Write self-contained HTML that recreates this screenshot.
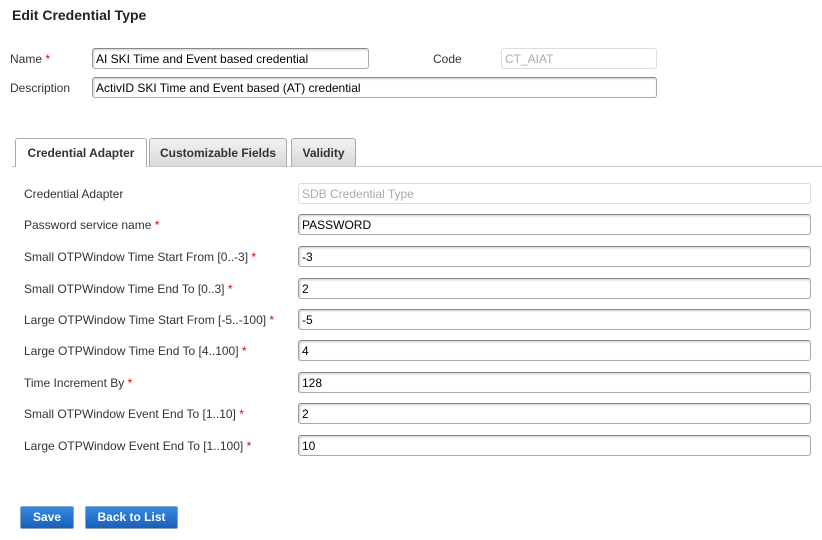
<!DOCTYPE html>
<html><head><style>
body{margin:0;width:822px;height:540px;background:#fff;font-family:"Liberation Sans",Arial,sans-serif;font-size:12px;color:#222;position:relative;overflow:hidden}
.a{position:absolute}
.t{position:absolute;font-size:12px;line-height:14px;color:#333}
.r{color:#d00}
.in{position:absolute;box-sizing:border-box;height:21px;border:1px solid #aaa;border-top-color:#888;border-left-color:#999;border-radius:3px;box-shadow:inset 1px 1px 2px #ccc;padding:3px 0 0 3px;font-size:12px;line-height:14px;color:#000;background:#fff}
.dis{border-color:#ddd;box-shadow:none;color:#aaa}
.tab{position:absolute;top:138px;height:28px;box-sizing:border-box;border:1px solid #aaa;border-bottom:none;border-radius:3px 3px 0 0;font-weight:bold;color:#333;text-align:center;line-height:28px;background:linear-gradient(#f2f2f2,#d8d8d8)}
.btn{position:absolute;top:506px;height:23px;box-sizing:border-box;border:1px solid #8aa3c4;border-radius:2px;background:linear-gradient(#3389e0,#1a5fb8);color:#fff;font-weight:bold;text-align:center;line-height:21px}
</style></head><body>
<div class="a" style="left:12px;top:6px;font-size:14px;font-weight:bold;line-height:18px">Edit Credential Type</div>
<div class="t" style="left:10px;top:52px">Name<span class="r"> *</span></div>
<div class="in" style="left:92px;top:48px;width:277px">AI SKI Time and Event based credential</div>
<div class="t" style="left:433px;top:52px">Code</div>
<div class="in dis" style="left:501px;top:48px;width:156px">CT_AIAT</div>
<div class="t" style="left:10px;top:81px">Description</div>
<div class="in" style="left:92px;top:77px;width:565px">ActivID SKI Time and Event based (AT) credential</div>

<div class="a" style="left:12px;top:166px;width:810px;height:1px;background:#ccc"></div>
<div class="tab" style="left:15px;width:132px;background:#fff;height:29px">Credential Adapter</div>
<div class="tab" style="left:149px;width:138px">Customizable Fields</div>
<div class="tab" style="left:291px;width:65px">Validity</div>

<div class="t" style="left:24px;top:187px">Credential Adapter</div>
<div class="in dis" style="left:298px;top:183px;width:513px">SDB Credential Type</div>
<div class="t" style="left:24px;top:218px">Password service name<span class="r"> *</span></div>
<div class="in" style="left:298px;top:214px;width:513px">PASSWORD</div>
<div class="t" style="left:24px;top:250px">Small OTPWindow Time Start From [0..-3]<span class="r"> *</span></div>
<div class="in" style="left:298px;top:246px;width:513px">-3</div>
<div class="t" style="left:24px;top:282px">Small OTPWindow Time End To [0..3]<span class="r"> *</span></div>
<div class="in" style="left:298px;top:278px;width:513px">2</div>
<div class="t" style="left:24px;top:313px">Large OTPWindow Time Start From [-5..-100]<span class="r"> *</span></div>
<div class="in" style="left:298px;top:309px;width:513px">-5</div>
<div class="t" style="left:24px;top:344px">Large OTPWindow Time End To [4..100]<span class="r"> *</span></div>
<div class="in" style="left:298px;top:340px;width:513px">4</div>
<div class="t" style="left:24px;top:376px">Time Increment By<span class="r"> *</span></div>
<div class="in" style="left:298px;top:372px;width:513px">128</div>
<div class="t" style="left:24px;top:407px">Small OTPWindow Event End To [1..10]<span class="r"> *</span></div>
<div class="in" style="left:298px;top:403px;width:513px">2</div>
<div class="t" style="left:24px;top:439px">Large OTPWindow Event End To [1..100]<span class="r"> *</span></div>
<div class="in" style="left:298px;top:435px;width:513px">10</div>

<div class="btn" style="left:20px;width:54px">Save</div>
<div class="btn" style="left:85px;width:93px">Back to List</div>
</body></html>
